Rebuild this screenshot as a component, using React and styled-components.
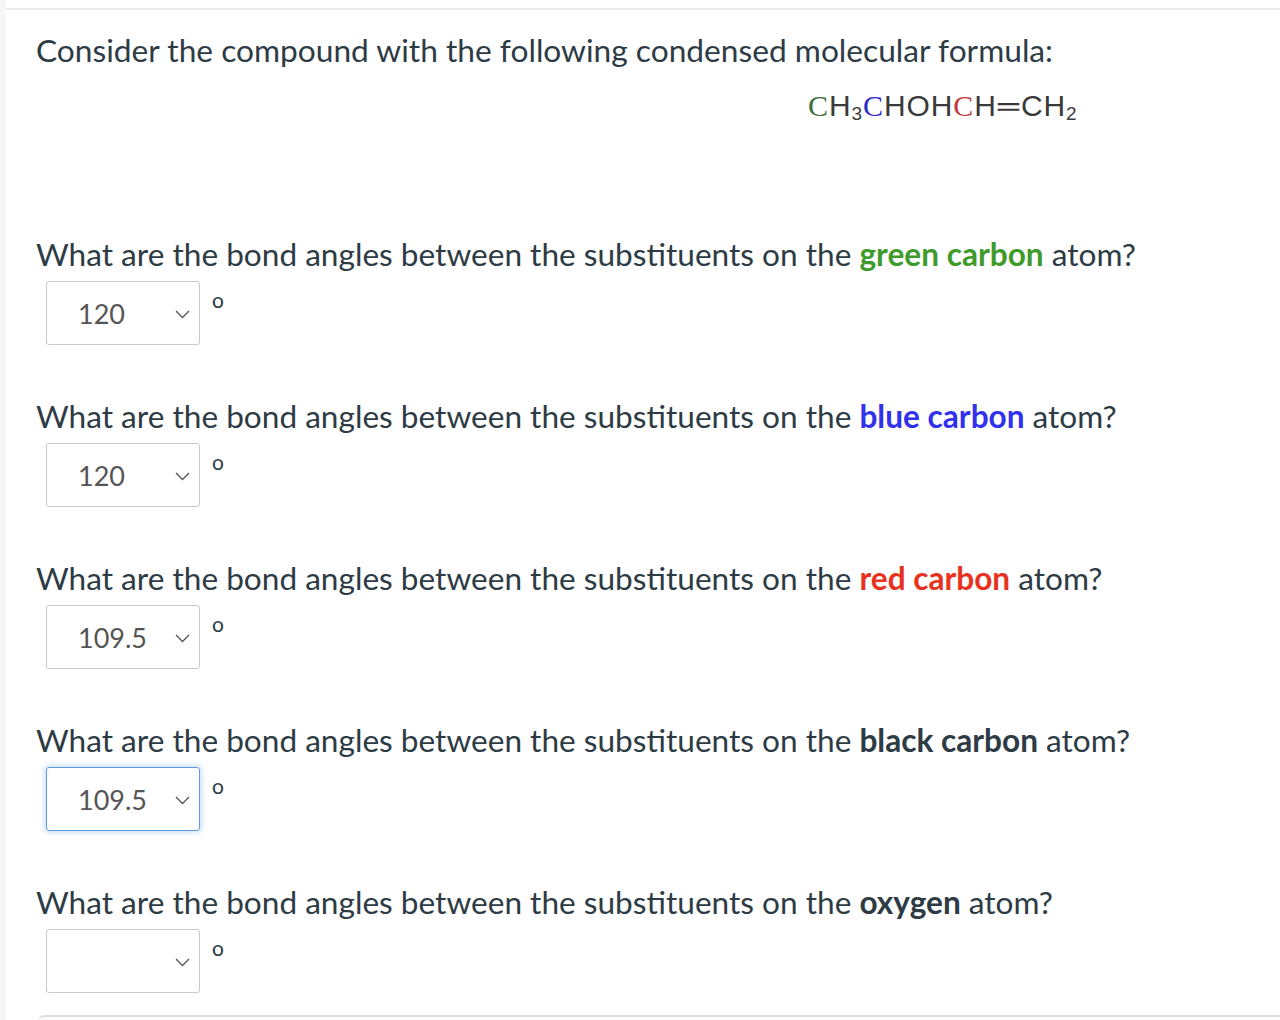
import React from 'react';
import styled, { createGlobalStyle } from 'styled-components';

const GlobalStyle = createGlobalStyle`
  body {
    margin: 0;
    background: #fff;
    font-family: Lato, "Open Sans", sans-serif;
    color: #2d3b45;
  }
`;

const questions = [
  { label: 'green carbon', color: '#3f9a2c', value: '120' },
  { label: 'blue carbon', color: '#3131ee', value: '120' },
  { label: 'red carbon', color: '#e8321f', value: '109.5' },
  { label: 'black carbon', color: '#2d3b45', value: '109.5', focused: true },
  { label: 'oxygen', color: '#2d3b45', value: '' }
];

const App = () => {
  return (
    <Shell>
      <GlobalStyle />
      <Panel>
        <Intro>Consider the compound with the following condensed molecular formula:</Intro>
        <Formula>
          <Atom c='#3d6e3d'>C</Atom>H<Sub>3</Sub>
          <Atom c='#2b2bc8'>C</Atom>HOH
          <Atom c='#c83a3a'>C</Atom>H<Bond>═</Bond>CH<Sub>2</Sub>
        </Formula>
        <Questions>
          {questions.map(q => (
            <Question key={q.label}>
              <Prompt>
                What are the bond angles between the substituents on the{' '}
                <Strong c={q.color}>{q.label}</Strong> atom?
              </Prompt>
              <AnswerRow>
                <Select focused={q.focused}>
                  <span>{q.value}</span>
                  <Chevron width='15' height='9' viewBox='0 0 15 9'>
                    <path d='M1 1l6.5 6.5L14 1' fill='none' stroke='#555' strokeWidth='1.3' />
                  </Chevron>
                </Select>
                <Degree>o</Degree>
              </AnswerRow>
            </Question>
          ))}
        </Questions>
        <NextBox />
      </Panel>
    </Shell>
  );
};

export default App;

const Shell = styled.div`
  min-height: 1020px;
  border-left: 6px solid #f7f7f7;
  overflow: hidden;
`;

const Panel = styled.div`
  margin-top: 8px;
  border-top: 2px solid #ebebeb;
  padding: 19px 0 0 30px;
`;

const Intro = styled.p`
  margin: 0;
  font-size: 31.7px;
  line-height: 42px;
`;

const Formula = styled.div`
  margin: 18px 0 0 772px;
  font-family: "Liberation Sans", Arial, sans-serif;
  font-size: 30px;
  line-height: 34px;
  color: #3a3a3a;
  letter-spacing: 0.9px;
`;

const Atom = styled.span`
  color: ${({ c }) => c};
  font-family: "Liberation Serif", serif;
`;

const Sub = styled.span`
  font-size: 19px;
  vertical-align: -4px;
`;

const Bond = styled.span`
  display: inline-block;
  margin: 0 1px;
`;

const Questions = styled.div`
  margin-top: 102px;
  display: flex;
  flex-direction: column;
  gap: 50px;
`;

const Question = styled.div``;

const Prompt = styled.p`
  margin: 0;
  font-size: 31.6px;
  line-height: 42px;
`;

const Strong = styled.strong`
  color: ${({ c }) => c};
  font-weight: 700;
`;

const AnswerRow = styled.div`
  display: flex;
  align-items: flex-start;
  margin: 6px 0 0 10px;
`;

const Select = styled.div`
  box-sizing: border-box;
  width: 154px;
  height: 64px;
  border: 1px solid ${({ focused }) => (focused ? '#5e9ae0' : '#c9c9c9')};
  border-radius: 3px;
  box-shadow: ${({ focused }) => (focused ? '0 0 5px 2px rgba(94, 154, 224, 0.3)' : 'none')};
  display: flex;
  align-items: center;
  justify-content: space-between;
  padding: 0 9px 0 31px;
  font-size: 27px;
  color: #555;
`;

const Chevron = styled.svg`
  display: block;
  margin-top: 2px;
`;

const Degree = styled.span`
  margin: 9px 0 0 12px;
  font-size: 21px;
  line-height: 20px;
  color: #2d3b45;
`;

const NextBox = styled.div`
  margin: 22px 0 0 2px;
  height: 20px;
  border-top: 2px solid #dedede;
  border-left: 1px solid #eee;
  border-radius: 6px 0 0 0;
`;
